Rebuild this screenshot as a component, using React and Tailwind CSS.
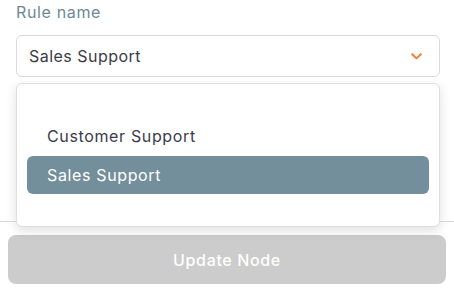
import React from "react";

const options = ["", "Customer Support", "Sales Support"];

export default function App() {
  const selected = "Sales Support";

  return (
    <div
      className="relative w-[454px] h-[293px] overflow-hidden bg-white tracking-[0.04em]"
      style={{ fontFamily: "Inter, 'Noto Sans', sans-serif" }}
    >
      <div className="px-4 pt-[1px]">
        <label className="block text-[16px] leading-[22px] text-[#6e8896]">
          Rule name
        </label>
        <button className="mt-[12px] flex h-[42px] w-[424px] items-center justify-between rounded-md border border-[#d9d9d9] bg-white pl-[12px] pr-[17px] text-[16px] tracking-[0.03em] text-[#3b3b46]">
          <span>{selected}</span>
          <svg width="11" height="7" viewBox="0 0 11 7" fill="none">
            <path
              d="M1.2 1.2 L5.5 5.4 L9.8 1.2"
              stroke="#f47b3b"
              strokeWidth="2"
              strokeLinecap="round"
              strokeLinejoin="round"
            />
          </svg>
        </button>
      </div>

      <div className="mt-[144px] border-t border-[#dcdcdc]" />

      <div className="px-2 pt-[13px]">
        <button
          disabled
          className="flex h-[49px] w-full items-center justify-center rounded-lg bg-[#cccccc] text-[16px] font-medium text-white"
        >
          Update Node
        </button>
      </div>

      <div className="absolute left-4 top-[83px] h-[144px] w-[424px] rounded-md border border-[#dedede] bg-white px-[10px] pt-[33px] shadow-[0_4px_12px_rgba(0,0,0,0.12)]">
        {options.slice(1).map((opt) => (
          <div
            key={opt}
            className={`flex h-[38px] items-center rounded-md pl-[20px] text-[16px] ${
              opt === selected
                ? "mt-[1px] bg-[#738f9b] text-white"
                : "text-[#3b3b4d]"
            }`}
          >
            {opt}
          </div>
        ))}
      </div>
    </div>
  );
}
